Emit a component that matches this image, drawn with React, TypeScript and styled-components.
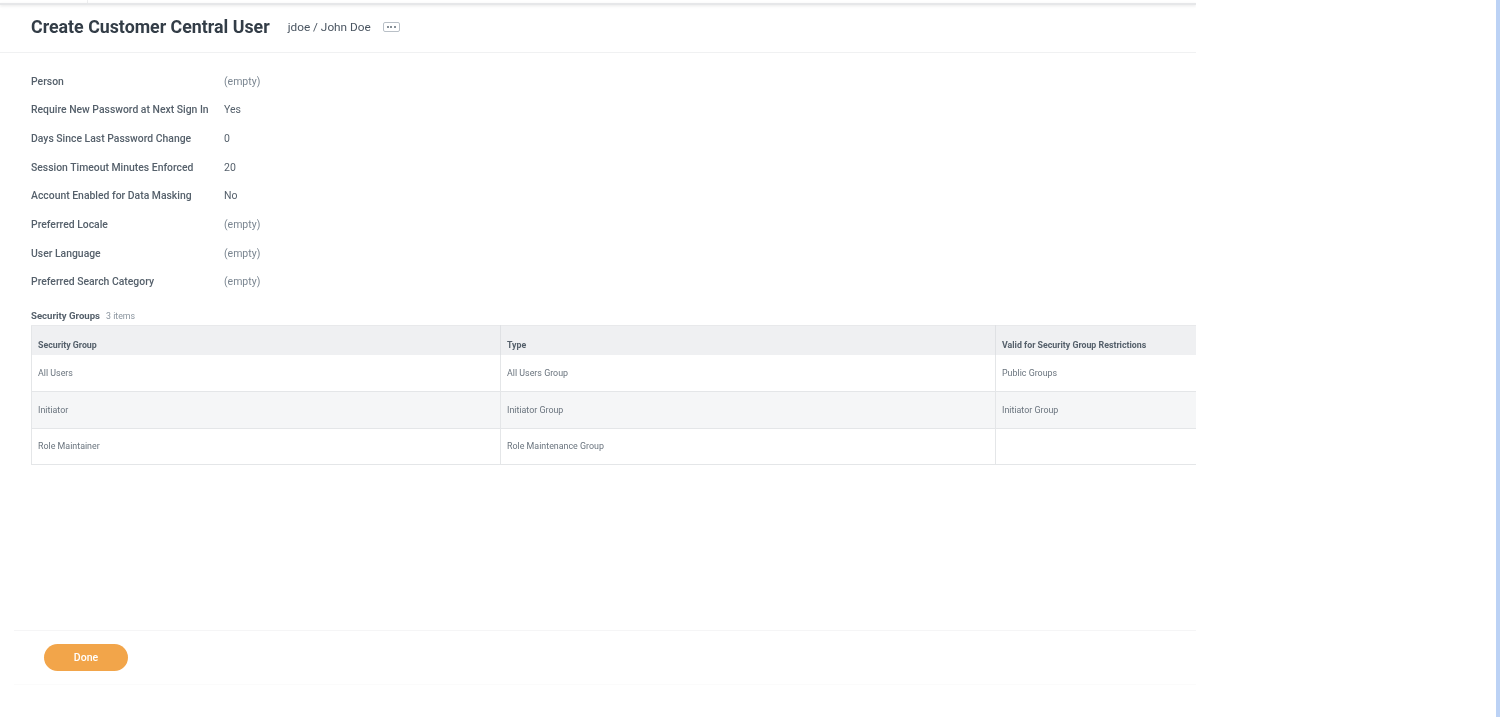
import styled, { createGlobalStyle } from "styled-components";

const GlobalStyle = createGlobalStyle`
  html, body {
    margin: 0;
    padding: 0;
    background: #fff;
    font-family: Roboto, "Liberation Sans", sans-serif;
    color: #333d47;
  }
`;

const Page = styled.div`
  display: flex;
  justify-content: space-between;
  width: 1500px;
  height: 717px;
  overflow: hidden;
`;

const Main = styled.main`
  display: flex;
  flex-direction: column;
  width: 1196px;
  height: 717px;
  overflow: hidden;
  filter: blur(0.35px);
`;

const Strip = styled.div`
  width: 4px;
  background: #bcd2f5;
`;

const TopTick = styled.div`
  width: 1px;
  height: 3px;
  margin-left: 87px;
  background: #eeeff0;
`;

const TopShade = styled.div`
  height: 2px;
  background: #e6e7e9;
  box-shadow: 0 1px 3px rgba(0, 0, 0, 0.1);
`;

const Header = styled.header`
  display: flex;
  align-items: center;
  height: 48px;
  padding: 0 0 4px 31px;
  box-sizing: border-box;
  border-bottom: 1px solid #f0f1f2;
`;

const Title = styled.h1`
  margin: 0 18px 0 0;
  font-size: 17.8px;
  font-weight: 700;
  color: #333d47;
  white-space: nowrap;
`;

const Subject = styled.span`
  margin-right: 12px;
  font-size: 11.8px;
  color: #4a5561;
`;

const MoreButton = styled.span`
  display: flex;
  align-items: center;
  justify-content: center;
  gap: 1.5px;
  width: 15px;
  height: 8px;
  border: 1px solid #b9c0c7;
  border-radius: 2px;
  i {
    width: 2px;
    height: 2px;
    border-radius: 50%;
    background: #5e6a75;
  }
`;

const Fields = styled.dl`
  display: flex;
  flex-direction: column;
  gap: 10.7px;
  margin: 0;
  padding: 19px 0 0 31px;
`;

const Field = styled.div`
  display: flex;
  align-items: center;
  height: 18px;
`;

const Label = styled.dt`
  width: 193px;
  font-size: 10.4px;
  font-weight: 500;
  color: #55606b;
  white-space: nowrap;
`;

const Value = styled.dd<{ $muted?: boolean }>`
  margin: 0;
  font-size: 10.5px;
  color: ${(p) => (p.$muted ? "#7b8691" : "#56616c")};
`;

const GroupHead = styled.div`
  display: flex;
  align-items: center;
  gap: 6px;
  height: 12px;
  margin: 19px 0 3px 31px;
`;

const GroupTitle = styled.span`
  font-size: 9.6px;
  font-weight: 700;
  color: #55606b;
`;

const GroupCount = styled.span`
  font-size: 8.8px;
  color: #8a949e;
`;

const Table = styled.table`
  width: 1165px;
  margin-left: 31px;
  border-collapse: collapse;
  table-layout: fixed;
  border-left: 1px solid #e4e6e8;
`;

const Th = styled.th<{ $width: number }>`
  width: ${(p) => p.$width}px;
  height: 30px;
  padding: 8px 0 0 6px;
  box-sizing: border-box;
  background: #eff0f2;
  border-top: 1px solid #e8e9eb;
  border-right: 1px solid #dfe1e4;
  font-size: 8.8px;
  font-weight: 700;
  text-align: left;
  color: #55606b;
  &:last-child {
    border-right: 0;
  }
`;

const Row = styled.tr<{ $shaded?: boolean }>`
  height: 36.4px;
  background: ${(p) => (p.$shaded ? "#f5f6f7" : "#fff")};
  border-bottom: 1px solid #e4e6e8;
`;

const Td = styled.td`
  padding: 0 0 0 6px;
  border-right: 1px solid #e4e6e8;
  font-size: 8.9px;
  color: #6a747e;
  &:last-child {
    border-right: 0;
  }
`;

const Footer = styled.footer`
  display: flex;
  align-items: center;
  height: 53px;
  margin: auto 0 32px 14px;
  padding: 0 0 0 30px;
  border-top: 1px solid #f5f5f6;
  border-bottom: 1px solid #fbfbfb;
`;

const DoneButton = styled.button`
  width: 84px;
  height: 27px;
  padding: 0;
  border: 0;
  border-radius: 14px;
  background: #f2a54a;
  font-family: inherit;
  font-size: 10.5px;
  font-weight: 500;
  color: #fff;
`;

const fields = [
  { label: "Person", value: "(empty)", muted: true },
  { label: "Require New Password at Next Sign In", value: "Yes" },
  { label: "Days Since Last Password Change", value: "0" },
  { label: "Session Timeout Minutes Enforced", value: "20" },
  { label: "Account Enabled for Data Masking", value: "No" },
  { label: "Preferred Locale", value: "(empty)", muted: true },
  { label: "User Language", value: "(empty)", muted: true },
  { label: "Preferred Search Category", value: "(empty)", muted: true },
];

const groups = [
  ["All Users", "All Users Group", "Public Groups"],
  ["Initiator", "Initiator Group", "Initiator Group"],
  ["Role Maintainer", "Role Maintenance Group", ""],
];

export default function App() {
  return (
    <Page>
      <GlobalStyle />
      <Main>
        <TopTick />
        <TopShade />
        <Header>
          <Title>Create Customer Central User</Title>
          <Subject>jdoe / John Doe</Subject>
          <MoreButton>
            <i />
            <i />
            <i />
          </MoreButton>
        </Header>
        <Fields>
          {fields.map((f) => (
            <Field key={f.label}>
              <Label>{f.label}</Label>
              <Value $muted={f.muted}>{f.value}</Value>
            </Field>
          ))}
        </Fields>
        <GroupHead>
          <GroupTitle>Security Groups</GroupTitle>
          <GroupCount>3 items</GroupCount>
        </GroupHead>
        <Table>
          <thead>
            <tr>
              <Th $width={469}>Security Group</Th>
              <Th $width={495}>Type</Th>
              <Th $width={201}>Valid for Security Group Restrictions</Th>
            </tr>
          </thead>
          <tbody>
            {groups.map((g, i) => (
              <Row key={g[0]} $shaded={i === 1}>
                {g.map((cell, j) => (
                  <Td key={j}>{cell}</Td>
                ))}
              </Row>
            ))}
          </tbody>
        </Table>
        <Footer>
          <DoneButton>Done</DoneButton>
        </Footer>
      </Main>
      <Strip />
    </Page>
  );
}
